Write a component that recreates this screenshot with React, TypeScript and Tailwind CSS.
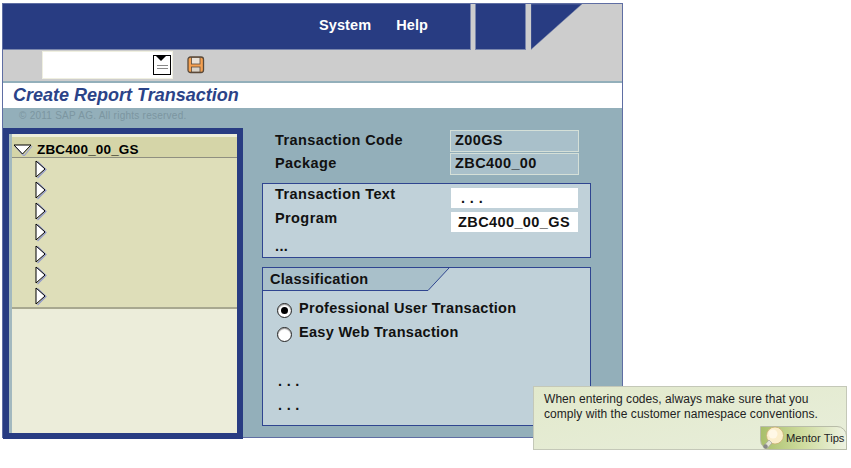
const font = { fontFamily: '"Liberation Sans", Arial, sans-serif' };

function Closed() {
  return (
    <svg width="12" height="19" viewBox="0 0 12 19" className="block">
      <path d="M2.5 1.5 L11 9.5 L2.5 18" fill="none" stroke="#8f97c8" strokeWidth="1.2" />
      <path d="M1 1 L10 9 L1 17 Z" fill="#fff" stroke="#000" strokeWidth="1" />
    </svg>
  );
}

function Radio({ on }: { on?: boolean }) {
  return (
    <span className="mt-[3px] w-[15px] h-[15px] rounded-full bg-white border border-[#222] flex items-center justify-center shadow-[inset_0_1px_1px_#999]">
      {on && <span className="w-[7px] h-[7px] rounded-full bg-black" />}
    </span>
  );
}

export default function App() {
  return (
    <div className="relative w-[851px] h-[468px] bg-white pt-[3px] pl-[2px] overflow-hidden" style={font}>
      <div className="w-[621px] h-[435px] border border-[#5f6ea3] bg-[#93afba] flex flex-col">
        {/* menu */}
        <div className="h-[46px] shrink-0 bg-[#cdcdcd] flex">
          <div className="w-[468px] bg-[#283c82] border-b border-r border-[#7b87ad] flex items-center justify-end pr-[42px] gap-[25px] text-white font-bold text-[14.5px] tracking-[0.1px] pb-[1px]">
            <span>System</span>
            <span>Help</span>
          </div>
          <div className="ml-[4px] w-[51px] bg-[#283c82] border-x border-b border-[#7b87ad]" />
          <svg width="52" height="46" viewBox="0 0 52 46" className="ml-[5px] block">
            <path d="M0 0 H51 L0 45.5 Z" fill="#283c82" stroke="#7b87ad" strokeWidth="0.5" />
          </svg>
        </div>
        {/* toolbar */}
        <div className="h-[31px] shrink-0 bg-[#cdcdcd] flex items-center pl-[39px] pb-[2px]">
          <div className="w-[131px] h-[28px] bg-white border border-[#efefe0] flex items-center justify-end pr-[1px]">
            <svg width="18" height="20" viewBox="0 0 18 20" className="block mt-[1px]">
              <rect x="0.5" y="0.5" width="17" height="19" fill="#fff" stroke="#000" />
              <path d="M3 1 H13 L8 6 Z" fill="#000" />
              <path d="M4 10.5 H15 M4 13.5 H15" stroke="#888" strokeWidth="1" />
            </svg>
          </div>
          <svg width="18" height="18" viewBox="0 0 18 18" className="ml-[14px] block mt-[1px]">
            <rect x="1" y="1" width="15.5" height="15.5" rx="2.5" fill="#f5a050" stroke="#5a4a3a" strokeWidth="1.3" />
            <rect x="4.5" y="1.5" width="8.5" height="6.5" fill="#e9e2d8" stroke="#5a4a3a" strokeWidth="0.8" />
            <rect x="4.5" y="11" width="8.5" height="5" fill="#d9d3c8" stroke="#5a4a3a" strokeWidth="0.8" />
          </svg>
        </div>
        {/* title */}
        <div className="mt-[2px] h-[25px] shrink-0 bg-white flex items-center pl-[10px]">
          <span className="italic font-bold text-[18px] text-[#2b4388]">Create Report Transaction</span>
        </div>
        <div className="h-[20px] shrink-0 pl-[16px] text-[10px] text-[#7c96a1] leading-[15px] tracking-[0.25px]">© 2011 SAP AG. All rights reserved.</div>
        {/* main */}
        <div className="flex h-[309px] shrink-0">
          {/* tree */}
          <div className="w-[240px] h-[311px] shrink-0 bg-[#283c82] border-[6px] border-[#283c82] flex flex-col">
            <div className="flex-1 border-l-[3px] border-[#a3b9bf] flex flex-col">
              <div className="h-[3px] bg-[#ecedda]" />
              <div className="h-[21px] bg-[#d5d5a8] border-b border-[#8f8f80] flex items-center pt-[6px]">
                <svg width="20" height="12" viewBox="0 0 20 12" className="block ml-[1px]">
                  <path d="M2 2 L11 12 L19 2" fill="none" stroke="#9aa0cc" strokeWidth="1.2" />
                  <path d="M1 1 H18 L9.5 10 Z" fill="#fff" stroke="#000" strokeWidth="1" />
                </svg>
                <span className="ml-[4px] font-bold text-[13.5px] text-black tracking-[0.15px]">ZBC400_00_GS</span>
              </div>
              <div className="h-[151px] bg-[#dedeb9] border-b-2 border-[#a8a890] pl-[23px] pt-[1px] flex flex-col justify-around">
                <Closed /><Closed /><Closed /><Closed /><Closed /><Closed /><Closed />
              </div>
              <div className="flex-1 bg-[#ecedda]" />
            </div>
          </div>
          {/* right */}
          <div className="ml-[19px] w-[329px] flex flex-col text-[14.5px] font-bold text-[#111] tracking-[0.4px]">
            <div className="pl-[13px] pr-[12px] flex items-center h-[23px] mt-[1px] justify-between shrink-0">
              <span>Transaction Code</span>
              <span className="w-[129px] h-[22px] bg-[#a9c0ca] border border-[#d5e0d8] pl-[4px] leading-[19px]">Z00GS</span>
            </div>
            <div className="pl-[13px] pr-[12px] flex items-center h-[23px] justify-between shrink-0">
              <span>Package</span>
              <span className="w-[129px] h-[22px] bg-[#a9c0ca] border border-[#d5e0d8] pl-[4px] leading-[19px]">ZBC400_00</span>
            </div>
            <div className="mt-[8px] h-[75px] shrink-0 bg-[#c0d1d9] border border-[#2f4590] pl-[12px] pr-[12px] flex flex-col">
              <div className="flex justify-between h-[28px] pt-[4px]">
                <span className="leading-[13px]">Transaction Text</span>
                <span className="w-[127px] h-[20px] bg-white pl-[10px] leading-[20px]">. . .</span>
              </div>
              <div className="flex justify-between h-[24px]">
                <span className="leading-[13px]">Program</span>
                <span className="w-[127px] h-[20px] bg-white pl-[7px] leading-[20px]">ZBC400_00_GS</span>
              </div>
              <div className="leading-[18px] mt-[1px]">...</div>
            </div>
            <div className="mt-[9px] h-[159px] shrink-0 bg-[#c0d1d9] border border-[#2f4590] flex flex-col tracking-[0.3px]">
              <div className="relative h-[23px]">
                <svg width="189" height="23" viewBox="0 0 189 23" className="absolute left-0 top-0 block">
                  <path d="M0 0 H186 L165 22.5 H0 Z" fill="#a9c0ca" />
                  <path d="M186 0 L165 22.5 H0" fill="none" stroke="#2f4590" strokeWidth="1" />
                </svg>
                <span className="absolute left-[7px] top-[3px] leading-[17px]">Classification</span>
              </div>
              <div className="mt-[6px] pl-[14px] flex items-center gap-[7px] h-[24px]">
                <Radio on /><span>Professional User Transaction</span>
              </div>
              <div className="pl-[14px] flex items-center gap-[7px] h-[24px]">
                <Radio /><span>Easy Web Transaction</span>
              </div>
              <div className="mt-[24px] pl-[15px] leading-[24px] h-[24px]">. . .</div>
              <div className="pl-[15px] leading-[24px] h-[24px]">. . .</div>
            </div>
          </div>
        </div>
      </div>
      {/* mentor tip */}
      <div className="absolute left-[533px] top-[386px] w-[314px] h-[64px] border border-[#c4c8b8] bg-gradient-to-br from-[#e2e9cc] to-[#e8eeda] pl-[10px] pt-[5px] text-[12px] leading-[15px] text-[#222] tracking-[0.05px]">
        <div>When entering codes, always make sure that you</div>
        <div>comply with the customer namespace conventions.</div>
        <div className="absolute right-[-1px] bottom-[-1px] w-[87px] h-[24px] rounded-tr-[10px] rounded-bl-[10px] border border-[#b8bca8] bg-gradient-to-r from-[#a9bf6a] via-[#cfdc9f] to-[#eef2e2] flex items-center">
          <svg width="23" height="24" viewBox="0 0 23 24" className="block shrink-0">
            <circle cx="14" cy="9.5" r="8.5" fill="#fbeecb" stroke="#c9b070" strokeWidth="0.8" />
            <circle cx="12" cy="8" r="4.5" fill="#fff8e6" />
            <path d="M8 14 L3.5 19 L6.5 22 L11 17 Z" fill="#e4e4d4" stroke="#999" strokeWidth="0.6" />
            <circle cx="4.5" cy="20.5" r="2.2" fill="#888" />
          </svg>
          <span className="ml-[2px] text-[11.2px] text-[#222] whitespace-nowrap tracking-normal">Mentor Tips</span>
        </div>
      </div>
    </div>
  );
}
